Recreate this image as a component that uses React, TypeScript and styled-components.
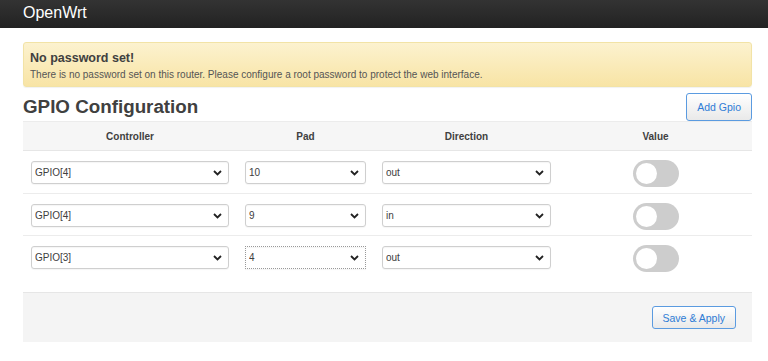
import React from "react";
import styled, { createGlobalStyle } from "styled-components";

const GlobalStyle = createGlobalStyle`
    html, body {
        margin: 0;
        padding: 0;
        background: #fff;
        font-family: "Liberation Sans", Arial, sans-serif;
        color: #404040;
    }
`;

const TopBar = styled.header`
    height: 28px;
    background: linear-gradient(#333, #222);
    display: flex;
    align-items: center;
    padding: 0 23px;
`;

const Brand = styled.a`
    color: #fff;
    font-size: 16px;
    text-decoration: none;
    margin-top: -2px;
`;

const Main = styled.main`
    padding: 14px 16px 0 23px;
`;

const Alert = styled.div`
    height: 45px;
    box-sizing: border-box;
    padding: 8px 6px 7px;
    border: 1px solid #f2e3a6;
    border-radius: 3px;
    background: linear-gradient(#fcf2cf, #f8e4a5);
    box-shadow: 0 1px 1px rgba(0, 0, 0, 0.06);
`;

const AlertTitle = styled.div`
    font-size: 12.5px;
    font-weight: bold;
    color: #404040;
    line-height: 15px;
`;

const AlertText = styled.div`
    font-size: 10px;
    color: #555;
    line-height: 13px;
    margin-top: 2px;
`;

const TitleRow = styled.div`
    display: flex;
    justify-content: space-between;
    align-items: center;
    margin-top: 5px;
    height: 29px;
`;

const Title = styled.h2`
    margin: 0;
    font-size: 18.8px;
    font-weight: bold;
    color: #404040;
`;

const Button = styled.button<{ $h: number }>`
    font-family: inherit;
    font-size: 10.5px;
    color: #2e7cd6;
    background: linear-gradient(#fff, #e9e9e9);
    border: 1px solid #5b9be0;
    border-radius: 3px;
    padding: 0 10px;
    height: ${({ $h }) => $h}px;
    cursor: pointer;
`;

const Table = styled.div`
    display: grid;
    grid-template-columns: 214px 137px 185px 1fr;
    border-top: 1px solid #ececec;
`;

const HeadCell = styled.div`
    background: #f6f6f6;
    height: 29px;
    box-sizing: border-box;
    display: flex;
    align-items: center;
    justify-content: center;
    font-size: 10px;
    font-weight: bold;
    color: #404040;
    border-bottom: 1px solid #e6e6e6;
`;

const Cell = styled.div<{ $h: number; $last?: boolean }>`
    height: ${({ $h }) => $h}px;
    box-sizing: border-box;
    padding: 10px 8px 0;
    display: flex;
    align-items: flex-start;
    justify-content: center;
    border-bottom: 1px solid ${({ $last }) => ($last ? "#e6e6e6" : "#ececec")};
`;

const SelectWrap = styled.div<{ $focus?: boolean }>`
    position: relative;
    width: 100%;
    height: 23px;
    box-sizing: border-box;
    border: 1px ${({ $focus }) => ($focus ? "dotted #999" : "solid #cfcfcf")};
    border-radius: ${({ $focus }) => ($focus ? "0" : "3px")};
    background: #fff;
    box-shadow: inset 0 1px 1px rgba(0, 0, 0, 0.04), 0 1px 1px rgba(0, 0, 0, 0.04);
`;

const Select = styled.select`
    appearance: none;
    -webkit-appearance: none;
    border: none;
    outline: none;
    background: transparent;
    width: 100%;
    height: 100%;
    padding: 0 20px 0 3px;
    font-family: inherit;
    font-size: 10px;
    color: #404040;
`;

const Chevron = styled.svg`
    position: absolute;
    right: 6px;
    top: 8px;
    pointer-events: none;
`;

const Toggle = styled.div`
    width: 46px;
    height: 27px;
    border-radius: 14px;
    background: #cdcdcd;
    position: relative;
    margin-top: -1px;

    &::after {
        content: "";
        position: absolute;
        left: 3px;
        top: 3px;
        width: 21px;
        height: 21px;
        border-radius: 50%;
        background: #fff;
    }
`;

const Footer = styled.div`
    background: #f4f4f4;
    height: 49px;
    display: flex;
    justify-content: flex-end;
    align-items: center;
    padding-right: 16px;
`;

type Row = { ctrl: string; pad: string; dir: string; h: number; focus?: boolean };

const rows: Row[] = [
    { ctrl: "GPIO[4]", pad: "10", dir: "out", h: 43 },
    { ctrl: "GPIO[4]", pad: "9", dir: "in", h: 42 },
    { ctrl: "GPIO[3]", pad: "4", dir: "out", h: 57, focus: true },
];

const Dropdown = ({ value, focus }: { value: string; focus?: boolean }) => (
    <SelectWrap $focus={focus}>
        <Select defaultValue={value}>
            <option>{value}</option>
        </Select>
        <Chevron width="9" height="6" viewBox="0 0 9 6">
            <path d="M1 1l3.5 3.5L8 1" fill="none" stroke="#222" strokeWidth="1.8" />
        </Chevron>
    </SelectWrap>
);

export default function App() {
    return (
        <>
            <GlobalStyle />
            <TopBar>
                <Brand href="#">OpenWrt</Brand>
            </TopBar>
            <Main>
                <Alert>
                    <AlertTitle>No password set!</AlertTitle>
                    <AlertText>
                        There is no password set on this router. Please configure a root password to protect the web interface.
                    </AlertText>
                </Alert>
                <TitleRow>
                    <Title>GPIO Configuration</Title>
                    <Button $h={28}>Add Gpio</Button>
                </TitleRow>
                <Table>
                    <HeadCell>Controller</HeadCell>
                    <HeadCell>Pad</HeadCell>
                    <HeadCell>Direction</HeadCell>
                    <HeadCell>Value</HeadCell>
                    {rows.map((r, i) => {
                        const last = i === rows.length - 1;
                        return (
                            <React.Fragment key={i}>
                                <Cell $h={r.h} $last={last}>
                                    <Dropdown value={r.ctrl} />
                                </Cell>
                                <Cell $h={r.h} $last={last}>
                                    <Dropdown value={r.pad} focus={r.focus} />
                                </Cell>
                                <Cell $h={r.h} $last={last}>
                                    <Dropdown value={r.dir} />
                                </Cell>
                                <Cell $h={r.h} $last={last}>
                                    <Toggle />
                                </Cell>
                            </React.Fragment>
                        );
                    })}
                </Table>
                <Footer>
                    <Button $h={23}>Save &amp; Apply</Button>
                </Footer>
            </Main>
        </>
    );
}
